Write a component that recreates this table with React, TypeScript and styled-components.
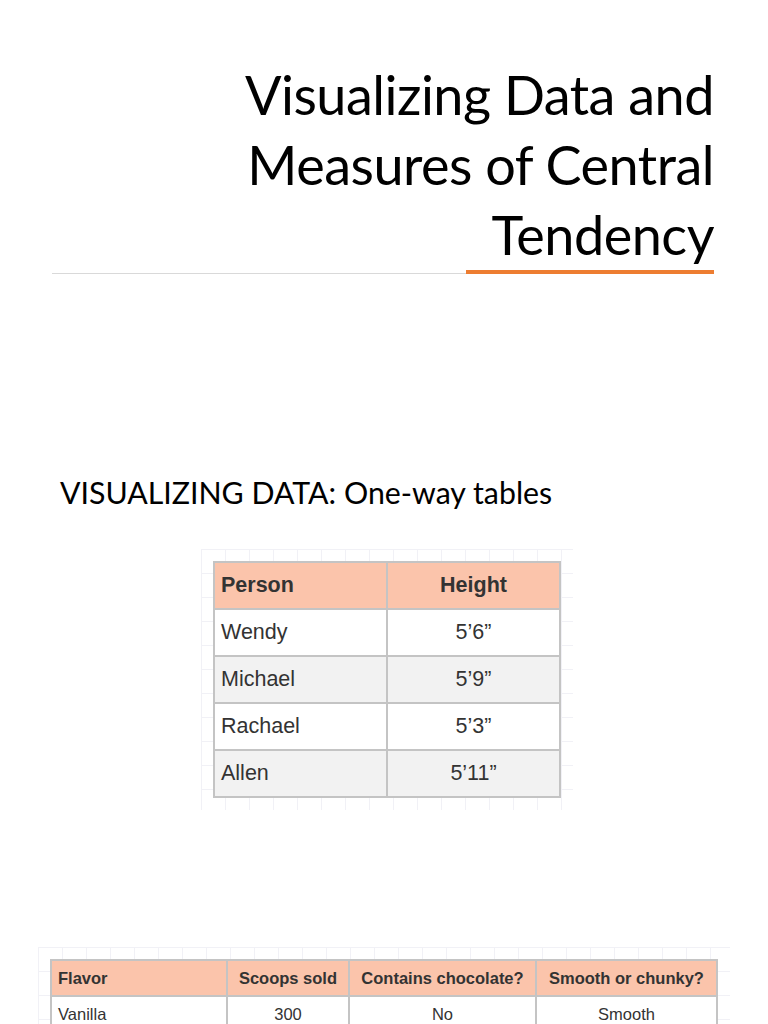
import React from 'react';
import styled, { createGlobalStyle } from 'styled-components';

const GlobalStyle = createGlobalStyle`
    html, body {
        margin: 0;
        padding: 0;
        background: #ffffff;
    }
    body {
        width: 768px;
        height: 1024px;
        overflow: hidden;
    }
`;

const Page = styled.div`
    display: flex;
    flex-direction: column;
    width: 768px;
    height: 1024px;
    overflow: hidden;
    background: #ffffff;
`;

const TitleBlock = styled.div`
    display: flex;
    flex-direction: column;
    padding: 60px 54px 0 52px;
`;

const Title = styled.h1`
    margin: 0;
    font-family: Lato, "Open Sans", sans-serif;
    font-weight: 400;
    font-size: 54px;
    letter-spacing: -0.5px;
    line-height: 70px;
    color: #000000;
    text-align: right;
`;

const Rule = styled.div`
    display: flex;
    align-items: flex-end;
    height: 4px;
`;

const GrayLine = styled.div`
    flex: 1;
    height: 1px;
    background: #d9d9d9;
`;

const AccentLine = styled.div`
    width: 248px;
    height: 4px;
    background: #ed7d31;
`;

const Subtitle = styled.h2`
    margin: 198px 0 0 60px;
    font-family: Lato, "Open Sans", sans-serif;
    font-weight: 400;
    font-size: 30.3px;
    line-height: 40px;
    color: #000000;
`;

const Backdrop = styled.div<{ $left: number; $top: number; $pad: number }>`
    align-self: flex-start;
    margin-left: ${p => p.$left}px;
    margin-top: ${p => p.$top}px;
    padding: ${p => p.$pad}px;
    background-color: #ffffff;
    background-image:
        linear-gradient(to right, #f1f1f6 1px, transparent 1px),
        linear-gradient(to bottom, #f1f1f6 1px, transparent 1px);
    background-size: 24px 24px;
`;

const Table = styled.table<{ $size: number; $row: number }>`
    border-collapse: collapse;
    font-family: "Liberation Sans", Arial, sans-serif;
    font-size: ${p => p.$size}px;
    color: #333333;
    background: #ffffff;

    th, td {
        border: 2px solid #c4c4c4;
        height: ${p => p.$row}px;
        padding: 0 6px;
        box-sizing: border-box;
        white-space: nowrap;
    }

    th {
        background: #fbc4ab;
        font-weight: 700;
    }

    tbody tr:nth-child(even) td {
        background: #f2f2f2;
    }
`;

const Cell = styled.td<{ $align?: 'left' | 'center' }>`
    text-align: ${p => p.$align || 'center'};
`;

const Head = styled.th<{ $align?: 'left' | 'center'; $w: number }>`
    text-align: ${p => p.$align || 'center'};
    width: ${p => p.$w}px;
`;

const heights = [
    ['Wendy', '5’6”'],
    ['Michael', '5’9”'],
    ['Rachael', '5’3”'],
    ['Allen', '5’11”'],
];

const flavors = [
    ['Vanilla', '300', 'No', 'Smooth'],
];

const App: React.FC = () => {
    return (
        <Page>
            <GlobalStyle />
            <TitleBlock>
                <Title>
                    Visualizing Data and<br />
                    Measures of Central<br />
                    Tendency
                </Title>
                <Rule>
                    <GrayLine />
                    <AccentLine />
                </Rule>
            </TitleBlock>
            <Subtitle>VISUALIZING DATA: One-way tables</Subtitle>
            <Backdrop $left={201} $top={37} $pad={12}>
                <Table $size={21.5} $row={47}>
                    <thead>
                        <tr>
                            <Head $align="left" $w={173}>Person</Head>
                            <Head $w={173}>Height</Head>
                        </tr>
                    </thead>
                    <tbody>
                        {heights.map(([name, h]) => (
                            <tr key={name}>
                                <Cell $align="left">{name}</Cell>
                                <Cell>{h}</Cell>
                            </tr>
                        ))}
                    </tbody>
                </Table>
            </Backdrop>
            <Backdrop $left={38} $top={137} $pad={12}>
                <Table $size={16.5} $row={36}>
                    <thead>
                        <tr>
                            <Head $align="left" $w={176}>Flavor</Head>
                            <Head $w={122}>Scoops sold</Head>
                            <Head $w={187}>Contains chocolate?</Head>
                            <Head $w={181}>Smooth or chunky?</Head>
                        </tr>
                    </thead>
                    <tbody>
                        {flavors.map(([f, s, c, t]) => (
                            <tr key={f}>
                                <Cell $align="left">{f}</Cell>
                                <Cell>{s}</Cell>
                                <Cell>{c}</Cell>
                                <Cell>{t}</Cell>
                            </tr>
                        ))}
                    </tbody>
                </Table>
            </Backdrop>
        </Page>
    );
};

export default App;
